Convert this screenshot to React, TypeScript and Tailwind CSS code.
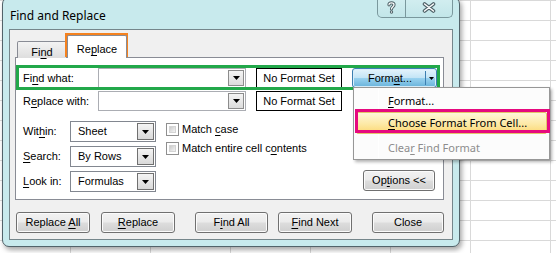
import React from 'react';

const dlg = "font-['Liberation_Sans',Arial,sans-serif] text-[11px] text-black";
const ui = "font-['Noto_Sans',sans-serif]";

// letter with the keyboard accelerator underline
const Acc = ({ text, at }: { text: string; at: number }) => (
  <span className="whitespace-pre">
    {text.slice(0, at)}
    <span className="underline decoration-1 underline-offset-[2px]">{text[at]}</span>
    {text.slice(at + 1)}
  </span>
);

const Arrow = () => (
  <svg width="7" height="4" viewBox="0 0 7 4">
    <path d="M0 0h7L3.5 4z" fill="#000" />
  </svg>
);

const btn =
  'flex items-center justify-center h-[21px] rounded-[3px] border border-[#707070] bg-[linear-gradient(#f2f2f2_0%,#ebebeb_48%,#dddddd_52%,#cfcfcf_100%)] shadow-[inset_0_0_0_1px_#fbfbfb]';

const Combo = () => (
  <div className="flex w-[148px] h-[20px] border border-[#abadb3] bg-white p-px justify-end">
    <div className="w-[16px] flex items-center justify-center border border-[#8c8c8c] bg-[linear-gradient(#f4f4f4,#dcdcdc)]">
      <Arrow />
    </div>
  </div>
);

const NoFormat = () => (
  <div className={`${dlg} ml-[10px] w-[86px] h-[20px] border border-black bg-white flex items-center justify-center`}>
    No Format Set
  </div>
);

const Select = ({ value }: { value: string }) => (
  <div className="flex w-[86px] h-[21px] border border-[#828790] bg-white p-px">
    <div className={`${dlg} flex-1 flex items-center pl-[6px]`}>{value}</div>
    <div className="w-[17px] flex items-center justify-center border border-[#707070] bg-[linear-gradient(#f4f4f4,#d9d9d9)]">
      <Arrow />
    </div>
  </div>
);

const Check = ({ children }: { children: React.ReactNode }) => (
  <div className="flex items-center h-[13px]">
    <div className="w-[13px] h-[13px] border border-[#8f8f8f] bg-white p-[2px]">
      <div className="w-full h-full bg-[linear-gradient(135deg,#cbcbcb,#f4f4f4)] border border-[#d4d4d4]" />
    </div>
    <span className={`${dlg} ml-[3px] leading-none`}>{children}</span>
  </div>
);

export default function App() {
  return (
    <div className="relative w-[556px] h-[253px] overflow-hidden bg-white bg-[linear-gradient(#d9d9d9_1px,transparent_1px),linear-gradient(90deg,#d9d9d9_1px,transparent_1px)] bg-size-[80px_20px] bg-position-[70px_0px]">
      {/* dialog window */}
      <div className="absolute left-[2px] top-[-3px] w-[458px] h-[250px] rounded-[7px] border border-[#52636a] bg-[#c8eaed] shadow-[2px_3px_5px_rgba(0,0,0,0.35)] flex flex-col">
        <div className="relative h-[31px] shrink-0 flex items-center pl-[7px] pt-[4px]">
          <span className={`${ui} text-[12px] text-black`}>Find and Replace</span>
          <div className="absolute right-[6px] top-0 flex">
            <div className="w-[29px] h-[20px] border border-t-0 border-[#7a989d] rounded-bl-[5px] bg-[linear-gradient(#d3eef0,#c2e6e9)] flex items-center justify-center">
              <svg width="9" height="13" viewBox="0 0 9 13">
                <path d="M2 3.8C2 1.2 7 1.2 7 3.8C7 5.8 4.5 5.6 4.5 8" fill="none" stroke="#4f6268" strokeWidth="3.2" strokeLinecap="round" />
                <circle cx="4.5" cy="11" r="1.7" fill="#4f6268" />
                <path d="M2 3.8C2 1.2 7 1.2 7 3.8C7 5.8 4.5 5.6 4.5 8" fill="none" stroke="#fff" strokeWidth="1.2" strokeLinecap="round" />
                <circle cx="4.5" cy="11" r="0.7" fill="#fff" />
              </svg>
            </div>
            <div className="w-[47px] h-[20px] border border-t-0 border-l-0 border-[#7a989d] rounded-br-[5px] bg-[linear-gradient(#d3eef0,#c2e6e9)] flex items-center justify-center">
              <svg width="14" height="11" viewBox="0 0 14 11">
                <path d="M2.5 2L11.5 9M11.5 2L2.5 9" stroke="#4f6268" strokeWidth="3.6" strokeLinecap="round" />
                <path d="M2.5 2L11.5 9M11.5 2L2.5 9" stroke="#fff" strokeWidth="1.4" strokeLinecap="round" />
              </svg>
            </div>
          </div>
        </div>

        {/* client area */}
        <div className="mx-[6px] h-[211px] border border-[#75868b] bg-[#f0f0f0] flex flex-col">
          <div className="pl-[5px] pt-[5px]">
            <div className="flex items-end h-[23px] pl-[2px]">
              <div className={`${dlg} w-[50px] h-[17px] border border-b-0 border-[#898c95] rounded-t-[2px] bg-[linear-gradient(#f3f3f3,#dedede)] flex justify-center pt-[2px]`}>
                <Acc text="Find" at={2} />
              </div>
              <div className={`${dlg} relative z-10 w-[60px] h-[23px] border border-b-0 border-[#898c95] rounded-t-[2px] bg-white flex justify-center pt-[5px]`}>
                <Acc text="Replace" at={2} />
              </div>
            </div>

            {/* tab panel */}
            <div className="-mt-px w-[429px] h-[143px] border border-[#898c95] bg-white flex flex-col">
              <div className="flex items-center h-[20px] mt-[10px] pl-[7px]">
                <div className={`${dlg} w-[75px]`}>
                  <Acc text="Find what:" at={2} />
                </div>
                <Combo />
                <NoFormat />
                <div className={`${dlg} ml-[10px] w-[85px] h-[20px] rounded-[3px] border border-[#3c7fb1] bg-[linear-gradient(#e5f4fc_0%,#c4e5f6_48%,#98d1ef_52%,#68b3db_100%)] shadow-[inset_0_0_0_1px_#d8eefb] flex`}>
                  <div className="flex-1 flex items-center justify-center pl-[2px]">
                    <Acc text="Format..." at={4} />
                  </div>
                  <div className="w-px my-[2px] bg-[#3c7fb1]" />
                  <div className="w-[10px] flex items-center justify-center">
                    <svg width="5" height="3" viewBox="0 0 5 3">
                      <path d="M0 0h5L2.5 3z" fill="#000" />
                    </svg>
                  </div>
                </div>
              </div>

              <div className="flex items-center h-[20px] mt-[3px] pl-[7px]">
                <div className={`${dlg} w-[75px]`}>
                  <Acc text="Replace with:" at={1} />
                </div>
                <Combo />
                <NoFormat />
              </div>

              <div className="flex mt-[10px] pl-[7px]">
                <div className="flex flex-col gap-[4px]">
                  {[
                    ['Within:', 3, 'Sheet'],
                    ['Search:', 0, 'By Rows'],
                    ['Look in:', 0, 'Formulas'],
                  ].map(([label, at, value]) => (
                    <div key={label as string} className="flex items-center">
                      <div className={`${dlg} w-[47px]`}>
                        <Acc text={label as string} at={at as number} />
                      </div>
                      <Select value={value as string} />
                    </div>
                  ))}
                </div>
                <div className="ml-[10px] pt-[2px] flex flex-col gap-[6px]">
                  <Check>
                    <Acc text="Match case" at={6} />
                  </Check>
                  <Check>
                    <Acc text="Match entire cell contents" at={19} />
                  </Check>
                </div>
                <div className={`${dlg} ${btn} ml-auto mr-[8px] mb-px self-end w-[72px] h-[20px]`}>
                  <Acc text="Options <<" at={2} />
                </div>
              </div>
            </div>
          </div>

          {/* bottom buttons */}
          <div className="flex mt-[12px] pl-[6px]">
            <div className={`${dlg} ${btn} w-[74px]`}>
              <Acc text="Replace All" at={8} />
            </div>
            <div className={`${dlg} ${btn} w-[74px] ml-[11px]`}>
              <Acc text="Replace" at={0} />
            </div>
            <div className={`${dlg} ${btn} w-[73px] ml-[20px]`}>
              <Acc text="Find All" at={1} />
            </div>
            <div className={`${dlg} ${btn} w-[74px] ml-[10px]`}>
              <Acc text="Find Next" at={0} />
            </div>
            <div className={`${dlg} ${btn} w-[72px] ml-[20px]`}>Close</div>
          </div>
        </div>
      </div>

      {/* annotation: orange box around the Replace tab */}
      <div className="absolute left-[65px] top-[33px] w-[63px] h-[24px] border-[3px] border-[#f5821f]" />
      {/* annotation: green box around the Find what row */}
      <div className="absolute left-[16px] top-[65px] w-[424px] h-[25px] border-[3px] border-[#22a84a]" />

      {/* Format dropdown menu */}
      <div className={`${ui} absolute left-[353px] top-[87px] w-[197px] h-[73px] border border-[#979797] bg-[#fcfcfc] shadow-[2px_2px_3px_rgba(0,0,0,0.3)] text-[11px] pt-[2px]`}>
        <div className="absolute left-[24px] top-px bottom-px w-px bg-[#e2e3e3] border-r border-white" />
        <div className="relative h-[22px] flex items-center pl-[34px] text-black">
          <Acc text="Format..." at={0} />
        </div>
        <div className="relative h-[22px] mx-[2px] rounded-[2px] border border-[#e3c56a] bg-[linear-gradient(#fff8d9_0%,#fde9a6_55%,#fcd873_100%)] flex items-center pl-[31px] text-black">
          <Acc text="Choose Format From Cell..." at={0} />
        </div>
        <div className="relative h-[22px] mt-[3px] flex items-center pl-[34px] text-[#8d8d8d]">
          <Acc text="Clear Find Format" at={4} />
        </div>
      </div>
      {/* annotation: pink box around the highlighted item */}
      <div className="absolute left-[355px] top-[109px] w-[195px] h-[24px] border-[3px] border-[#e6097f]" />
    </div>
  );
}
